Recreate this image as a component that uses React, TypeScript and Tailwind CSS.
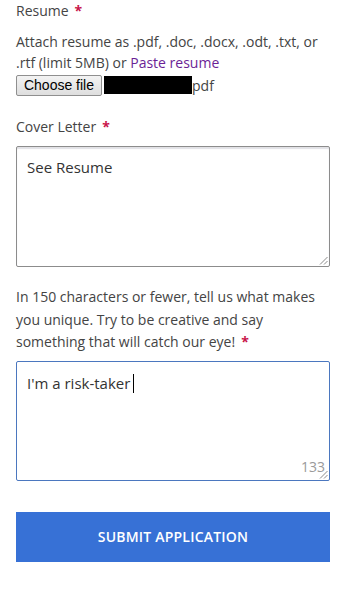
import React from "react";

function Grip() {
  return (
    <svg className="absolute right-[1px] bottom-[1px]" width="9" height="9" viewBox="0 0 9 9">
      <line x1="8.5" y1="1" x2="1" y2="8.5" stroke="#8a8a8a" strokeWidth="1" />
      <line x1="8.5" y1="5" x2="5" y2="8.5" stroke="#8a8a8a" strokeWidth="1" />
    </svg>
  );
}

function Star() {
  return <span className="ml-[6px] font-bold text-[#c8144a]">*</span>;
}

export default function App() {
  return (
    <div className="min-h-[597px] w-[357px] bg-white font-['Open_Sans',sans-serif] text-[#444]">
      <div className="flex w-[330px] flex-col pl-4">
        <div className="text-[14px] leading-[21px]">
          Resume
          <Star />
        </div>
        <p className="mt-[10px] text-[14px] leading-[21px]">
          Attach resume as .pdf, .doc, .docx, .odt, .txt, or .rtf (limit 5MB) or{" "}
          <span className="text-[#6b1f96]">Paste resume</span>
        </p>
        <div className="mt-[2px] flex h-[20px] items-center">
          <div className="flex h-[21px] w-[86px] items-center justify-center rounded-[2px] border border-[#8f8f8f] bg-gradient-to-b from-[#f3f3f3] to-[#dedede] font-['Liberation_Sans',sans-serif] text-[14px] text-black">
            Choose file
          </div>
          <div className="ml-[2px] h-[18px] w-[88px] bg-black" />
          <span className="text-[14px] text-[#444]">pdf</span>
        </div>
        <div className="mt-[21px] text-[14px] leading-[21px]">
          Cover Letter
          <Star />
        </div>
        <div className="relative mt-[9px] h-[121px] w-[314px] rounded-[2px] border border-[#8c8c8c] shadow-[inset_0_2px_1px_#e2e2e6] px-[10px] pt-[9px] pb-[10px] text-[15px] leading-[22px] text-[#333]">
          See Resume
          <Grip />
        </div>
        <p className="mt-[19px] text-[14px] leading-[22.5px]">
          In 150 characters or fewer, tell us what makes you unique. Try to be creative and say something that will catch our eye!
          <Star />
        </p>
        <div className="relative mt-[7px] h-[120px] w-[314px] rounded-[2px] border border-[#4b77bf] px-[10px] pt-[8px] pb-[10px] text-[15px] leading-[22px] text-[#333]">
          <span>I'm a risk-taker</span>
          <span className="ml-[3px] inline-block h-[19px] w-[1px] translate-y-[4px] bg-black" />
          <span className="absolute right-[4px] bottom-[2px] text-[14px] text-[#9a9a9a]">133</span>
          <Grip />
        </div>
        <div className="mt-[31px] flex h-[50px] w-[314px] items-center justify-center bg-[#3771d6] text-[14px] font-semibold tracking-[0.2px] text-white">
          SUBMIT APPLICATION
        </div>
      </div>
    </div>
  );
}
